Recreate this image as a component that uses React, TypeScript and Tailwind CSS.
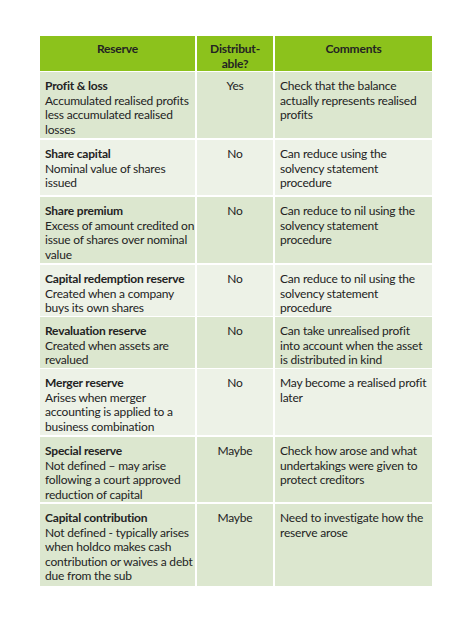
import React from 'react';

type Row = {
  title: string;
  desc: string[];
  dist: string;
  comments: string[];
  h: string;
  shade: 'dark' | 'light';
};

const rows: Row[] = [
  {
    title: 'Profit & loss',
    desc: ['Accumulated realised profits', 'less accumulated realised', 'losses'],
    dist: 'Yes',
    comments: ['Check that the balance', 'actually represents realised', 'profits'],
    h: 'h-[66px]',
    shade: 'dark',
  },
  {
    title: 'Share capital',
    desc: ['Nominal value of shares', 'issued'],
    dist: 'No',
    comments: ['Can reduce using the', 'solvency statement', 'procedure'],
    h: 'h-[55px]',
    shade: 'light',
  },
  {
    title: 'Share premium',
    desc: ['Excess of amount credited on', 'issue of shares over nominal', 'value'],
    dist: 'No',
    comments: ['Can reduce to nil using the', 'solvency statement', 'procedure'],
    h: 'h-[66px]',
    shade: 'dark',
  },
  {
    title: 'Capital redemption reserve',
    desc: ['Created when a company', 'buys its own shares'],
    dist: 'No',
    comments: ['Can reduce to nil using the', 'solvency statement', 'procedure'],
    h: 'h-[50px]',
    shade: 'light',
  },
  {
    title: 'Revaluation reserve',
    desc: ['Created when assets are', 'revalued'],
    dist: 'No',
    comments: ['Can take unrealised profit', 'into account when the asset', 'is distributed in kind'],
    h: 'h-[50px]',
    shade: 'dark',
  },
  {
    title: 'Merger reserve',
    desc: ['Arises when merger', 'accounting is applied to a', 'business combination'],
    dist: 'No',
    comments: ['May become a realised profit', 'later'],
    h: 'h-[66px]',
    shade: 'light',
  },
  {
    title: 'Special reserve',
    desc: ['Not defined – may arise', 'following a court approved', 'reduction of capital'],
    dist: 'Maybe',
    comments: ['Check how arose and what', 'undertakings were given to', 'protect creditors'],
    h: 'h-[65px]',
    shade: 'dark',
  },
  {
    title: 'Capital contribution',
    desc: ['Not defined - typically arises', 'when holdco makes cash', 'contribution or waives a debt', 'due from the sub'],
    dist: 'Maybe',
    comments: ['Need to investigate how the', 'reserve arose'],
    h: 'h-[82px]',
    shade: 'dark',
  },
];

const Lines: React.FC<{ lines: string[] }> = ({ lines }) => (
  <>
    {lines.map((l, i) => (
      <div key={i} className="whitespace-nowrap">
        {l}
      </div>
    ))}
  </>
);

export default function App() {
  return (
    <div className="min-h-[632px] bg-white pt-[36px] pl-[40px]">
      <div
        className="w-[392px] flex flex-col gap-[2px] text-[12px] leading-[14.5px] tracking-[-0.2px] text-[#232323]"
        style={{ fontFamily: 'Lato, "Open Sans", sans-serif' }}
      >
        <div className="grid grid-cols-[155px_76px_157px] gap-x-[2px] h-[34px] font-bold text-center">
          <div className="bg-[#8cc21c] pt-[6px]">Reserve</div>
          <div className="bg-[#8cc21c] pt-[6px]">
            <div>Distribut-</div>
            <div>able?</div>
          </div>
          <div className="bg-[#8cc21c] pt-[6px]">Comments</div>
        </div>
        {rows.map((r) => {
          const bg = r.shade === 'dark' ? 'bg-[#dce7cf]' : 'bg-[#edf2e7]';
          return (
            <div key={r.title} className={`grid grid-cols-[155px_76px_157px] gap-x-[2px] ${r.h}`}>
              <div className={`${bg} pt-[7px] pl-[5px]`}>
                <div className="font-bold whitespace-nowrap">{r.title}</div>
                <Lines lines={r.desc} />
              </div>
              <div className={`${bg} pt-[7px] text-center`}>{r.dist}</div>
              <div className={`${bg} pt-[7px] pl-[5px]`}>
                <Lines lines={r.comments} />
              </div>
            </div>
          );
        })}
      </div>
    </div>
  );
}
